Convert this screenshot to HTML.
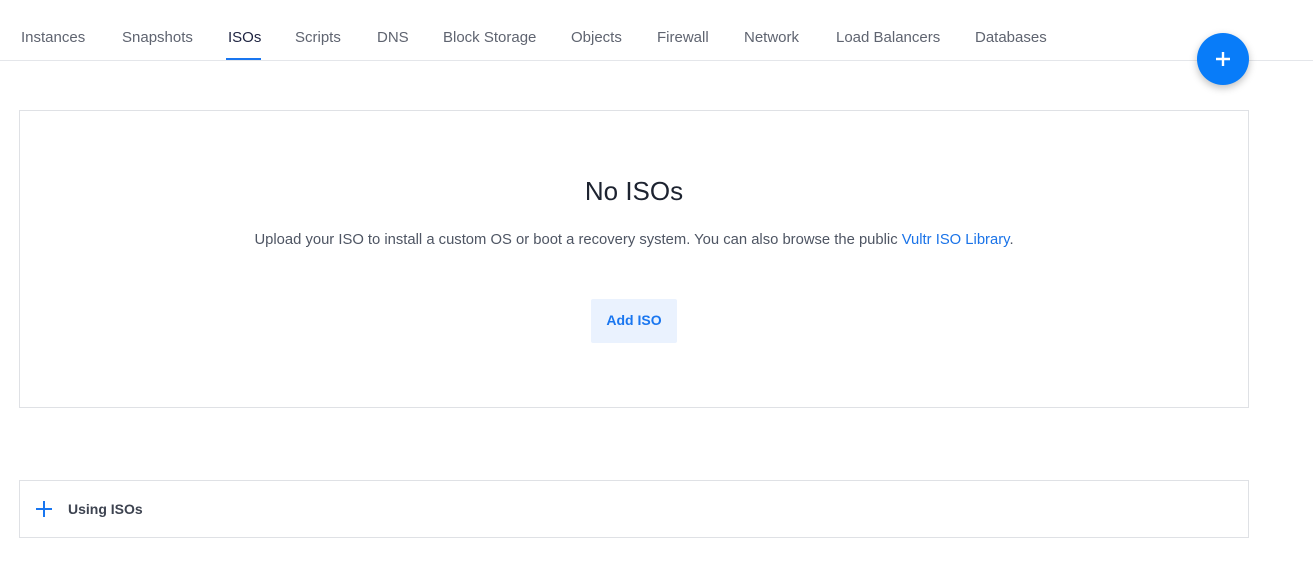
<!DOCTYPE html>
<html><head><style>
body{margin:0;width:1313px;height:571px;background:#fff;font-family:"Liberation Sans",sans-serif;position:relative;overflow:hidden;color:#555b66}
.t{position:absolute;top:29px;font-size:15px;color:#5f6470;white-space:nowrap}
.line{position:absolute;left:0;top:60px;width:1313px;height:1px;background:#e4e6ea}
.ul{position:absolute;left:226px;top:58px;width:35px;height:2px;background:#1976f0}
.fab{position:absolute;left:1197px;top:33px;width:52px;height:52px;border-radius:50%;background:#087cf9;box-shadow:0 3px 8px rgba(0,0,0,.25)}
.card{position:absolute;left:19px;top:110px;width:1228px;height:296px;border:1px solid #dfe1e5}
.card2{position:absolute;left:19px;top:480px;width:1228px;height:56px;border:1px solid #dfe1e5}
</style></head><body>
<div class="t" style="left:21px">Instances</div>
<div class="t" style="left:122px">Snapshots</div>
<div class="t" style="left:228px;color:#1d2340">ISOs</div>
<div class="t" style="left:295px">Scripts</div>
<div class="t" style="left:377px">DNS</div>
<div class="t" style="left:443px">Block Storage</div>
<div class="t" style="left:571px">Objects</div>
<div class="t" style="left:657px">Firewall</div>
<div class="t" style="left:744px">Network</div>
<div class="t" style="left:836px">Load Balancers</div>
<div class="t" style="left:975px">Databases</div>
<div class="line"></div><div class="ul"></div>
<div class="fab"><svg width="52" height="52"><path d="M26 19v14M19 26h14" stroke="#fff" stroke-width="2.4"/></svg></div>
<div class="card">
<div style="position:absolute;left:0;width:100%;top:65px;text-align:center;font-size:26px;color:#1d2330">No ISOs</div>
<div style="position:absolute;left:0;width:100%;top:121px;text-align:center;font-size:14.8px;color:#4e5563">Upload your ISO to install a custom OS or boot a recovery system. You can also browse the public <span style="color:#1a73e8">Vultr ISO Library</span>.</div>
<div style="position:absolute;left:571px;top:188px;width:86px;height:44px;background:#eaf2fe;border-radius:2px;color:#1976f0;font-weight:bold;font-size:14px;line-height:42px;text-align:center">Add ISO</div>
</div>
<div class="card2">
<svg style="position:absolute;left:15px;top:19px" width="18" height="18"><path d="M9 1v16M1 9h16" stroke="#1976f0" stroke-width="2"/></svg>
<div style="position:absolute;left:48px;top:20px;font-size:14px;font-weight:bold;color:#3d4350">Using ISOs</div>
</div>
</body></html>
